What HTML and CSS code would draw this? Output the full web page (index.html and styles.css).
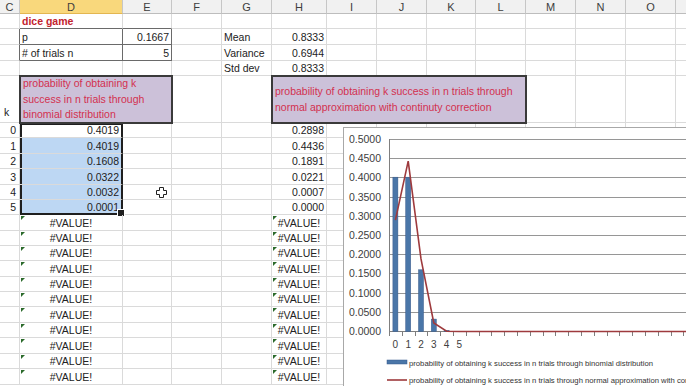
FILE: index.html
```html
<!DOCTYPE html>
<html lang="en">
<head>
    <meta charset="UTF-8">
    <meta name="viewport" content="width=device-width, initial-scale=1.0">
    <title>dice game</title>
    <link rel="stylesheet" href="styles.css">
</head>
<body>
    <div class="screen">
        <div class="sheet" id="sheet"></div>

        <div class="chart">
            <svg width="400" height="300" viewBox="0 0 400 300">
                <g class="gridlines">
                    <line x1="45" y1="11.5" x2="400" y2="11.5"/>
                    <line x1="45" y1="30.5" x2="400" y2="30.5"/>
                    <line x1="45" y1="49.5" x2="400" y2="49.5"/>
                    <line x1="45" y1="69.5" x2="400" y2="69.5"/>
                    <line x1="45" y1="88.5" x2="400" y2="88.5"/>
                    <line x1="45" y1="107.5" x2="400" y2="107.5"/>
                    <line x1="45" y1="126.5" x2="400" y2="126.5"/>
                    <line x1="45" y1="145.5" x2="400" y2="145.5"/>
                    <line x1="45" y1="165.5" x2="400" y2="165.5"/>
                    <line x1="45" y1="184.5" x2="400" y2="184.5"/>
                </g>
                <line class="axis" x1="45.5" y1="11" x2="45.5" y2="204"/>
                <line class="axis" x1="45" y1="203.5" x2="400" y2="203.5"/>
                <path class="axis" d="M45.5 204v4M58.5 204v4M71.5 204v4M83.5 204v4M96.5 204v4M109.5 204v4M122.5 204v4M135.5 204v4M147.5 204v4M160.5 204v4M173.5 204v4M186.5 204v4M199.5 204v4M211.5 204v4M224.5 204v4M237.5 204v4M250.5 204v4M263.5 204v4M275.5 204v4M288.5 204v4M301.5 204v4M314.5 204v4M327.5 204v4M339.5 204v4"/>

                <g class="ylabels">
                    <text x="37" y="15">0.5000</text>
                    <text x="37" y="34">0.4500</text>
                    <text x="37" y="53">0.4000</text>
                    <text x="37" y="73">0.3500</text>
                    <text x="37" y="92">0.3000</text>
                    <text x="37" y="111">0.2500</text>
                    <text x="37" y="130">0.2000</text>
                    <text x="37" y="149">0.1500</text>
                    <text x="37" y="169">0.1000</text>
                    <text x="37" y="188">0.0500</text>
                    <text x="37" y="207">0.0000</text>
                </g>
                <g class="xlabels">
                    <text x="51.4" y="220">0</text>
                    <text x="64.2" y="220">1</text>
                    <text x="77" y="220">2</text>
                    <text x="89.8" y="220">3</text>
                    <text x="102.6" y="220">4</text>
                    <text x="115.4" y="220">5</text>
                </g>

                <g class="bars">
                    <rect x="48.9" y="49.2" width="5" height="154.3"/>
                    <rect x="61.7" y="49.2" width="5" height="154.3"/>
                    <rect x="74.5" y="141.8" width="5" height="61.7"/>
                    <rect x="87.3" y="191.1" width="5" height="12.4"/>
                    <rect x="100.1" y="202.3" width="5" height="1.2"/>
                </g>
                <polyline class="curve" points="51.4,92.2 64.2,33.2 77,130.9 89.8,195 102.6,203.2 115.4,203.5 400,203.5"/>

                <rect class="swatch" x="43" y="232" width="20" height="4"/>
                <text class="legend" x="65" y="237.5">probability of obtaining k success in n trials through binomial distribution</text>
                <line class="curve" x1="43" y1="252" x2="63" y2="252"/>
                <text class="legend" x="65" y="255">probability of obtaining k success in n trials through normal approximation with continuty correction</text>
            </svg>
        </div>

        <svg class="cursor" width="11" height="11" viewBox="0 0 11 11">
            <path d="M3.5 0.5h4v3h3v4h-3v3h-4v-3h-3v-4h3z"/>
        </svg>
    </div>

    <script>
        const sheet = document.getElementById('sheet');

        const letters = ['C', 'D', 'E', 'F', 'G', 'H', 'I', 'J', 'K', 'L', 'M', 'N', 'O', ''];
        const binomial = ['0.4019', '0.4019', '0.1608', '0.0322', '0.0032', '0.0001'];
        const normal = ['0.2898', '0.4436', '0.1891', '0.0221', '0.0007', '0.0000'];

        function cell(text, cls) {
            const el = document.createElement('div');
            el.className = 'cell' + (cls ? ' ' + cls : '');
            el.textContent = text || '';
            sheet.appendChild(el);
        }

        // one sheet row; cells = { column index: [text, class, span] }
        function row(cells) {
            let c = 0;
            while (c < letters.length) {
                const spec = cells[c];
                if (spec) {
                    cell(spec[0], spec[1]);
                    c += spec[2] || 1;
                } else {
                    cell('', '');
                    c++;
                }
            }
        }

        letters.forEach((l, i) => cell(l, i === 1 ? 'hd on' : 'hd'));

        row({ 1: ['dice game', 'title tb-top'], 2: ['', 'tb-top'] });
        row({ 0: ['', 'tb-left'], 1: ['p', 'tb'], 2: ['0.1667', 'tb num'], 4: ['Mean'], 5: ['0.8333', 'num'] });
        row({ 0: ['', 'tb-left'], 1: ['# of trials n', 'tb'], 2: ['5', 'tb num'], 4: ['Variance'], 5: ['0.6944', 'num'] });
        row({ 4: ['Std dev'], 5: ['0.8333', 'num'] });
        row({
            0: ['k', 'low'],
            1: ['probability of obtaining k success in n trials through binomial distribution', 'note span2', 2],
            5: ['probability of obtaining k success in n trials through normal approximation with continuty correction', 'note span5', 5]
        });

        binomial.forEach((v, k) => {
            let sel = 'num sel';
            if (k === 0) sel += ' first';
            else sel += ' hl';
            if (k === binomial.length - 1) sel += ' last';
            row({ 0: [String(k), 'num key'], 1: [v, sel], 5: [normal[k], 'num'] });
        });

        for (let i = 0; i < 11; i++) {
            row({ 1: ['#VALUE!', 'err'], 5: ['#VALUE!', 'err'] });
        }
    </script>
</body>
</html>
```

FILE: styles.css
```css
* {
    margin: 0;
    padding: 0;
    box-sizing: border-box;
}

body {
    font-family: "Liberation Sans", Arial, sans-serif;
    font-size: 10.5px;
    color: #222;
    background: #fff;
    overflow: hidden;
}

.screen {
    position: relative;
    width: 686px;
    height: 386px;
    overflow: hidden;
}

.sheet {
    display: grid;
    grid-template-columns: 20px 103px 49px 50px 50px 55px 50px 50px 49px 50px 50px 50px 50px 60px;
    grid-template-rows: 14px 15px 16px 16px 15px 47px 15px 16px 15px 16px 15px 15px 16px 15px 15px 16px 15px 15px 16px 15px 16px 15px 16px;
}

.cell {
    display: flex;
    align-items: center;
    padding: 0 2px;
    white-space: nowrap;
    line-height: 14px;
    border-right: 1px solid #dadada;
    border-bottom: 1px solid #dadada;
}

.hd {
    justify-content: center;
    background: #f1f1f1;
    color: #3d3d3d;
    font-size: 11px;
    border-right-color: #c6c6c6;
    border-bottom-color: #bdbdbd;
}

.hd.on {
    background: #f9d87c;
    border-bottom-color: #e3b650;
}

.num {
    justify-content: flex-end;
}

.key {
    padding-right: 3px;
}

.title {
    color: #c2232d;
    font-weight: bold;
}

.low {
    align-items: flex-end;
    padding: 0 0 3px 4px;
}

.tb {
    border-right-color: #6a6a6a;
    border-bottom-color: #6a6a6a;
}

.tb-top {
    border-bottom-color: #6a6a6a;
}

.tb-left {
    border-right-color: #6a6a6a;
}

.span2 {
    grid-column: span 2;
}

.span5 {
    grid-column: span 5;
}

.note {
    z-index: 1;
    margin: -1px;
    padding: 0 2px;
    white-space: normal;
    line-height: 15.5px;
    color: #d3304f;
    background: #ccc1d9;
    border: 2px solid #3a3a3a;
}

.hl {
    background: #bdd7f3;
}

.sel {
    position: relative;
    border-right: 2px solid #1f1f1f;
    box-shadow: inset 2px 0 #1f1f1f;
}

.sel.first {
    box-shadow: inset 2px 0 #1f1f1f, inset 0 2px #1f1f1f;
}

.sel.last {
    border-bottom: 2px solid #1f1f1f;
}

.sel.last::after {
    content: '';
    position: absolute;
    right: -4px;
    bottom: -4px;
    width: 6px;
    height: 6px;
    background: #1f1f1f;
    border: 1px solid #fff;
}

.err {
    position: relative;
    justify-content: center;
}

.err::before {
    content: '';
    position: absolute;
    left: 1px;
    top: 1px;
    border-top: 4px solid #2b6a2b;
    border-right: 4px solid transparent;
}

.chart {
    position: absolute;
    left: 343px;
    top: 127px;
    width: 400px;
    height: 300px;
    background: #fff;
    border: 1px solid #a8a8a8;
    z-index: 2;
}

.chart svg {
    display: block;
}

.gridlines line {
    stroke: #969696;
    stroke-width: 1;
}

.axis {
    stroke: #7f7f7f;
    stroke-width: 1;
    fill: none;
}

.ylabels text {
    font-size: 10.5px;
    fill: #404040;
    text-anchor: end;
}

.xlabels text {
    font-size: 10px;
    fill: #404040;
    text-anchor: middle;
}

.bars rect,
.swatch {
    fill: #4a76a8;
    stroke: #36598a;
    stroke-width: 0.5;
}

.curve {
    fill: none;
    stroke: #9e3a3d;
    stroke-width: 1.6;
}

.legend {
    font-size: 7.7px;
    fill: #333;
}

.cursor {
    position: absolute;
    left: 156px;
    top: 187px;
    z-index: 3;
}

.cursor path {
    fill: #fff;
    stroke: #222;
    stroke-width: 1;
}
```
